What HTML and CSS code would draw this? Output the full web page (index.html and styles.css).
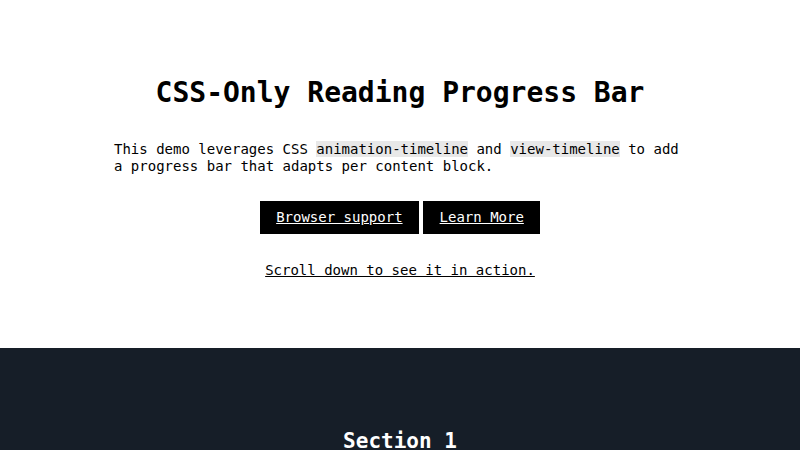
FILE: index.html
```html
<!DOCTYPE html>
<html lang="en">
<head>
<meta charset="UTF-8" />
<title>CSS-Only Reading Progress Bar</title>
<link rel="stylesheet" href="styles.css">
</head>
<body>
<header class="intro">
  <h1>CSS-Only Reading Progress Bar</h1>
  <p>This demo leverages CSS <code>animation-timeline</code> and <code>view-timeline</code> to add a progress bar that adapts per content block.</p>
  <div class="actions">
    <a class="btn" href="#support">Browser support</a>
    <a class="btn" href="#more">Learn More</a>
  </div>
  <a class="scroll" href="#section-1">Scroll down to see it in action.</a>
</header>

<section class="block" id="section-1">
  <h2>Section 1</h2>
</section>
</body>
</html>
```

FILE: styles.css
```css
body { margin: 0; font-family: "DejaVu Sans Mono", monospace; font-size: 14px; color: #000; background: #fff; }
.intro { box-sizing: border-box; height: 348px; max-width: 572px; margin: 0 auto; padding-top: 76px; text-align: center; }
.intro h1 { margin: 0; font-size: 28px; line-height: 33px; }
.intro p { margin: 32px 0 0; text-align: left; line-height: 17px; }
code { font-family: inherit; font-size: inherit; background: #e8e8e8; }
.actions { margin-top: 26px; display: flex; justify-content: center; gap: 4px; }
.btn { display: block; padding: 8px 16.5px; line-height: 17px; background: #000; color: #fff; }
.scroll { display: inline-block; margin-top: 28px; color: #000; line-height: 17px; }
.block { background: #161e28; color: #fff; min-height: 400px; padding-top: 81px; text-align: center; }
.block h2 { margin: 0; font-size: 21px; line-height: 25px; }
```
